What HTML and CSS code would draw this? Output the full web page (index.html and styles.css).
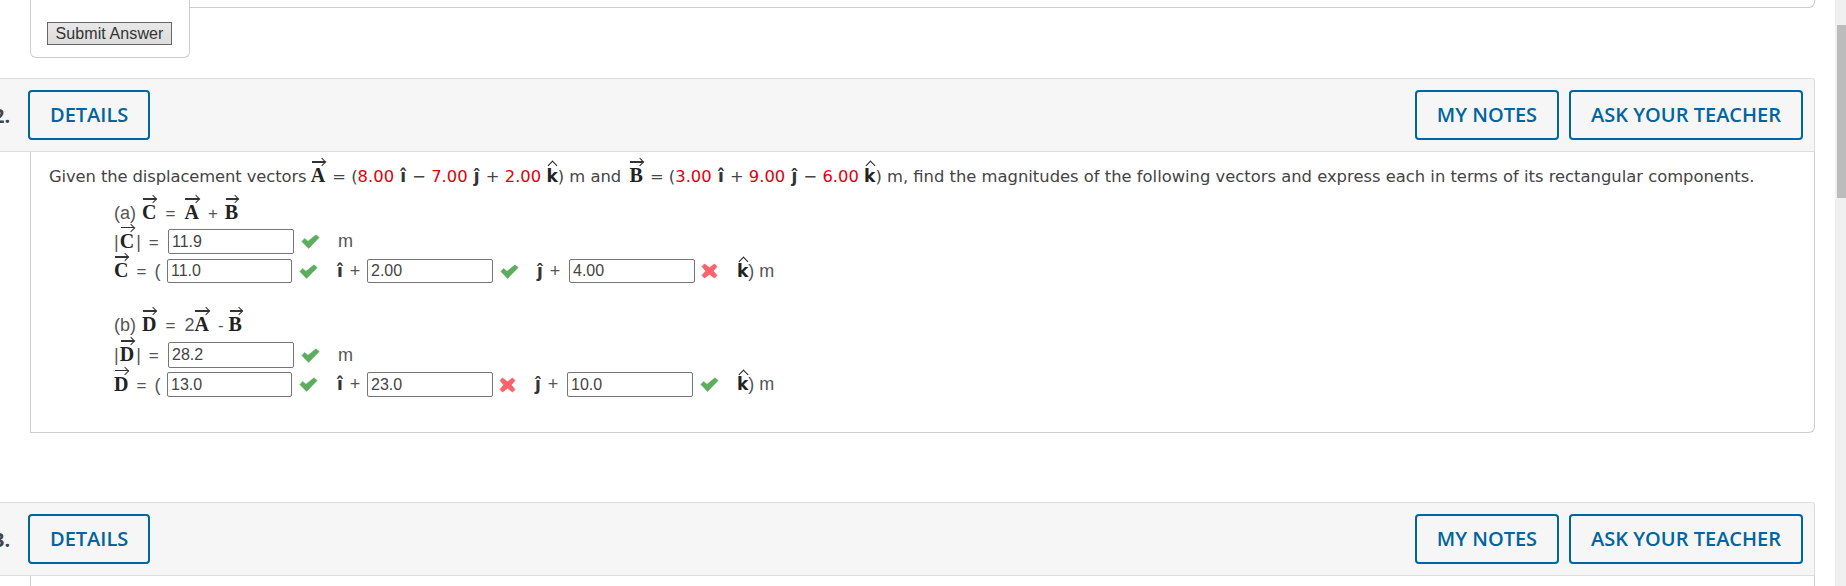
FILE: index.html
```html
<!DOCTYPE html>
<html lang="en">
<head>
<meta charset="utf-8">
<title>Question</title>
<link rel="stylesheet" href="styles.css">
</head>
<body>
<main class="page">
  <div class="prev">
    <div class="tab"><button class="submit" type="button">Submit Answer</button></div>
    <div class="prev-rest"></div>
  </div>

  <section class="question">
    <header class="qhead">
      <span class="qnum">2.</span>
      <button class="btn" type="button">DETAILS</button>
      <div class="qactions">
        <button class="btn" type="button">MY NOTES</button>
        <button class="btn" type="button">ASK YOUR TEACHER</button>
      </div>
    </header>
    <div class="qbody">
      <p class="intro"><span class="lead">Given the displacement vectors</span> <span class="vec vec-first">A</span> = (<span class="red">8.00</span> <b class="hat">î</b> − <span class="red">7.00</span> <b class="hat">ĵ</b> + <span class="red">2.00</span> <b class="khat">k</b>) m and <span class="vec">B</span> = (<span class="red">3.00</span> <b class="hat">î</b> + <span class="red">9.00</span> <b class="hat">ĵ</b> − <span class="red">6.00</span> <b class="khat">k</b>) m, find the magnitudes of the following vectors and express each in terms of its rectangular components.</p>

      <div class="part">
        <div class="eq">(a) <span class="vec">C</span> <span class="op">=</span> <span class="vec">A</span> <span class="op">+</span> <span class="vec">B</span></div>
        <div class="row row-mag">
          <span class="lbl lbl-mag">|<span class="vec">C</span>| <span class="op">=</span></span>
          <input class="field" type="text" value="11.9" readonly>
          <span class="mark"><svg class="ico" viewBox="0 0 19 15"><path class="ok" d="M0.8 7.6 L3.6 4.4 L7 7.2 L15 0.8 L18.2 3.6 L7.6 14.4 Z"/></svg></span>
          <span class="unit">m</span>
        </div>
        <div class="row row-comp">
          <span class="lbl lbl-comp"><span class="vec">C</span> <span class="op">=</span> (</span>
          <input class="field field-short" type="text" value="11.0" readonly>
          <span class="mark"><svg class="ico" viewBox="0 0 19 15"><path class="ok" d="M0.8 7.6 L3.6 4.4 L7 7.2 L15 0.8 L18.2 3.6 L7.6 14.4 Z"/></svg></span>
          <span class="sym sym-first"><b class="hat hat-i">î</b> +</span>
          <input class="field" type="text" value="2.00" readonly>
          <span class="mark"><svg class="ico" viewBox="0 0 19 15"><path class="ok" d="M0.8 7.6 L3.6 4.4 L7 7.2 L15 0.8 L18.2 3.6 L7.6 14.4 Z"/></svg></span>
          <span class="sym"><b class="hat">ĵ</b> +</span>
          <input class="field" type="text" value="4.00" readonly>
          <span class="mark mark-x"><svg class="ico ico-x" viewBox="0 0 17 16"><path class="no" d="M3.5 1 L8.5 4.8 L13.5 1 L16 3.5 L12.2 8 L16 12.5 L13.5 15 L8.5 11.2 L3.5 15 L1 12.5 L4.8 8 L1 3.5 Z"/></svg></span>
          <span class="end"><b class="khat">k</b>) <span class="unit">m</span></span>
        </div>

        <div class="eq eq-b">(b) <span class="vec">D</span> <span class="op">=</span> <span class="two">2</span><span class="vec vec-tight">A</span> <span class="op">-</span> <span class="vec">B</span></div>
        <div class="row row-mag row-mag-b">
          <span class="lbl lbl-mag">|<span class="vec">D</span>| <span class="op">=</span></span>
          <input class="field" type="text" value="28.2" readonly>
          <span class="mark"><svg class="ico" viewBox="0 0 19 15"><path class="ok" d="M0.8 7.6 L3.6 4.4 L7 7.2 L15 0.8 L18.2 3.6 L7.6 14.4 Z"/></svg></span>
          <span class="unit">m</span>
        </div>
        <div class="row row-comp row-comp-b">
          <span class="lbl lbl-comp"><span class="vec">D</span> <span class="op">=</span> (</span>
          <input class="field field-short" type="text" value="13.0" readonly>
          <span class="mark"><svg class="ico" viewBox="0 0 19 15"><path class="ok" d="M0.8 7.6 L3.6 4.4 L7 7.2 L15 0.8 L18.2 3.6 L7.6 14.4 Z"/></svg></span>
          <span class="sym sym-first"><b class="hat hat-i">î</b> +</span>
          <input class="field" type="text" value="23.0" readonly>
          <span class="mark mark-x"><svg class="ico ico-x" viewBox="0 0 17 16"><path class="no" d="M3.5 1 L8.5 4.8 L13.5 1 L16 3.5 L12.2 8 L16 12.5 L13.5 15 L8.5 11.2 L3.5 15 L1 12.5 L4.8 8 L1 3.5 Z"/></svg></span>
          <span class="sym"><b class="hat">ĵ</b> +</span>
          <input class="field" type="text" value="10.0" readonly>
          <span class="mark"><svg class="ico" viewBox="0 0 19 15"><path class="ok" d="M0.8 7.6 L3.6 4.4 L7 7.2 L15 0.8 L18.2 3.6 L7.6 14.4 Z"/></svg></span>
          <span class="end"><b class="khat">k</b>) <span class="unit">m</span></span>
        </div>
      </div>
    </div>
  </section>

  <section class="question question-next">
    <header class="qhead">
      <span class="qnum">3.</span>
      <button class="btn" type="button">DETAILS</button>
      <div class="qactions">
        <button class="btn" type="button">MY NOTES</button>
        <button class="btn" type="button">ASK YOUR TEACHER</button>
      </div>
    </header>
    <div class="qbody qbody-cut"></div>
  </section>
</main>
<div class="scrollbar"><div class="thumb"></div></div>
</body>
</html>
```

FILE: styles.css
```css
* { box-sizing: border-box; }
html, body { margin: 0; height: 586px; overflow: hidden; background: #fff; }
body {
  display: flex;
  font-family: "Liberation Sans", Arial, sans-serif;
  font-size: 16px;
  color: #444;
}
.page { flex: 1; min-width: 0; padding-right: 20px; }
.scrollbar { flex: none; width: 11px; height: 586px; padding: 25px 0 0 2px; background: #f0f0f0; }
.thumb { height: 173px; background: #bcbcbc; }

.prev { display: flex; height: 78px; padding-left: 30px; align-items: flex-start; }
.tab {
  width: 160px;
  height: 58px;
  padding: 22px 0 0 16px;
  border: 1px solid #ccc;
  border-top: 0;
  border-radius: 0 0 6px 6px;
}
.prev-rest {
  flex: 1;
  height: 8px;
  margin-left: -1px;
  border-bottom: 1px solid #ccc;
  border-right: 1px solid #ccc;
  border-radius: 0 0 6px 0;
}
.submit {
  display: block;
  width: 125px;
  height: 23px;
  padding: 0;
  background: linear-gradient(#e8e8e8, #dcdcdc);
  border: 1px solid #666;
  font: 16px/21px "Liberation Sans", Arial, sans-serif;
  letter-spacing: 0.1px;
  color: #333;
}

.qhead {
  display: flex;
  align-items: center;
  height: 74px;
  padding: 0 11px 0 28px;
  background: #f6f6f6;
  border: 1px solid #ddd;
  border-left: 0;
  border-radius: 0 3px 0 0;
  position: relative;
}
.qnum {
  position: absolute;
  left: -7px;
  font: 700 20px "Open Sans", sans-serif;
  color: #444;
}
.btn {
  height: 50px;
  padding: 0 20px 2px;
  background: #f6f6f6;
  border: 2px solid #00659e;
  border-radius: 4px;
  font: 600 20px "Open Sans", sans-serif;
  color: #00659e;
}
.qactions { display: flex; gap: 10px; margin-left: auto; }

.qbody {
  margin-left: 30px;
  height: 281px;
  padding: 0 18px;
  border: 1px solid #ccc;
  border-top: 0;
  border-radius: 0 0 6px 0;
  font-family: "DejaVu Sans", Verdana, sans-serif;
  font-size: 16.38px;
}
.qbody-cut { height: 11px; border-bottom: 0; border-radius: 0; }
.question-next { margin-top: 69px; }

.intro { margin: 0; padding-top: 13px; height: 41px; line-height: 22px; white-space: nowrap; }
.lead { letter-spacing: -0.1px; }
.intro .vec { margin: 0 2px 0 3px; }
.intro .vec-first { margin-left: -1px; }
.intro .hat { margin: 0 1px; }
.red { color: #e2000f; }
.hat { font-family: "DejaVu Sans", sans-serif; font-size: 17px; font-weight: 700; color: #333; }
.khat {
  position: relative;
  display: inline-block;
  font-family: "DejaVu Sans", sans-serif;
  font-size: 17px;
  font-weight: 700;
  color: #222;
}
.khat::before {
  content: "";
  position: absolute;
  left: 3px;
  top: -3px;
  width: 6px;
  height: 6px;
  border-left: 1.6px solid #222;
  border-top: 1.6px solid #222;
  transform: rotate(45deg);
}

.vec {
  position: relative;
  display: inline-block;
  font: 700 20px/1 "Liberation Serif", serif;
  color: #222;
}
.vec::before {
  content: "";
  position: absolute;
  left: 1px;
  right: 0;
  top: -4px;
  height: 1.5px;
  background: #333;
}
.vec::after {
  content: "";
  position: absolute;
  right: 0;
  top: -6px;
  width: 5px;
  height: 5px;
  border-top: 1.5px solid #333;
  border-right: 1.5px solid #333;
  transform: rotate(45deg);
}

.part { margin-left: 65px; font-family: "Liberation Sans", Arial, sans-serif; font-size: 18px; color: #555; }
.eq { height: 36px; padding-top: 8px; line-height: 24px; white-space: nowrap; }
.eq .vec { margin: 0 1px; }
.eq .op { margin: 0 3px; }
.eq .vec-tight { margin-left: 0; }
.eq .vec:last-child { margin-left: -1px; }
.eq-b { height: 29px; margin-top: 30px; padding-top: 0; }
.eq-b .vec:last-child { margin-left: -3px; }
.op { margin: 0 3px; font-size: 17px; }
.two { margin-left: 1px; }

.row { display: flex; align-items: center; height: 24px; white-space: nowrap; }
.row-mag { height: 25px; margin-bottom: 5px; }
.row-mag-b { height: 26px; margin-bottom: 4px; }
.row-comp-b { height: 25px; }
.lbl { display: block; }
.lbl-mag { width: 54px; }
.lbl-mag .vec { margin: 0 2px 0 1px; }
.lbl-comp { width: 53px; }

.field {
  width: 126px;
  height: 100%;
  padding: 0 3px;
  border: 1px solid #767676;
  border-radius: 2px;
  background: #fff;
  font: 16px "Liberation Sans", Arial, sans-serif;
  color: #444;
  outline: 0;
}
.field-short { width: 125px; }
.mark { display: flex; align-items: center; width: 44px; padding-left: 7px; }
.mark-x { width: 42px; padding-left: 6px; }
.ico { width: 19px; height: 15px; }
.ico-x { width: 17px; height: 16px; }
.ok { fill: #5cae5e; stroke: #5cae5e; stroke-width: 0.5; stroke-linejoin: round; }
.no { fill: #f8636c; stroke: #f8636c; stroke-width: 0.8; stroke-linejoin: round; }
.sym { width: 32px; }
.sym .hat { margin-right: 2px; }
.sym-first { width: 31px; }
.sym .hat-i { margin-left: 1px; }
.end { display: block; }
.unit { color: #555; }
```
